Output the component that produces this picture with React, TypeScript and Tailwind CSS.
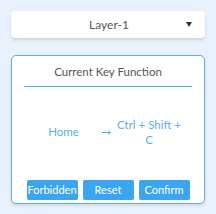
export default function App() {
  return (
    <div className="w-[216px] h-[214px] bg-[#e9f1fc] px-[11px] pt-[11px] font-['Lato','Noto_Sans',sans-serif]">
      <div className="relative flex h-[27px] items-center justify-center rounded-[4px] bg-white shadow-[0_2px_3px_rgba(0,0,0,0.12)]">
        <span className="text-[12px] text-[#555] pl-[2px]">Layer-1</span>
        <span className="absolute right-[13px] top-[11px] h-0 w-0 border-x-[3px] border-t-[5px] border-x-transparent border-t-[#333]" />
      </div>
      <div className="mt-[17px] flex h-[149px] flex-col rounded-[5px] border border-[#5ab0e6] bg-white shadow-[0_2px_3px_rgba(0,0,0,0.1)]">
        <div className="mx-[12px] flex h-[31px] items-center justify-center border-b border-[#4fb0e2] pt-[1px] text-[11.5px] text-[#555]">
          Current Key Function
        </div>
        <div className="flex flex-1 items-center pb-[4px] text-[11.5px] leading-[15px] text-[#5aaee8]">
          <div className="ml-[22px] w-[59px] text-center">Home</div>
          <div className="ml-[9px] flex w-[9px] justify-center">
            <svg width="9" height="6" viewBox="0 0 9 6" fill="none" stroke="#5aaee8" strokeWidth="1">
              <path d="M0 3.5H8.5M6 1.5L8.5 3.5L6 5.5" />
            </svg>
          </div>
          <div className="w-[76px] text-center">Ctrl + Shift +<br />C</div>
        </div>
        <div className="mb-[3px] flex justify-center gap-[5px]">
          {['Forbidden', 'Reset', 'Confirm'].map((t) => (
            <button key={t} className="h-[20px] w-[51px] rounded-[2px] bg-[#3aa5f0] text-[11px] text-white">
              {t}
            </button>
          ))}
        </div>
      </div>
    </div>
  );
}
